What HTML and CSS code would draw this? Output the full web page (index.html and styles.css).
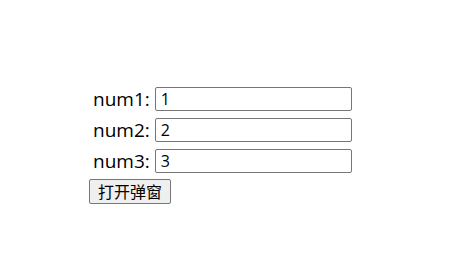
FILE: index.html
```html
<!DOCTYPE html>
<html lang="zh">
<head>
<meta charset="utf-8">
<title>弹窗</title>
<link rel="stylesheet" href="styles.css">
</head>
<body>
<div class="form">
  <div class="row"><label class="label" for="n1">num1:</label><input class="field" id="n1" type="text" value="1"></div>
  <div class="row"><label class="label" for="n2">num2:</label><input class="field" id="n2" type="text" value="2"></div>
  <div class="row"><label class="label" for="n3">num3:</label><input class="field" id="n3" type="text" value="3"></div>
  <div class="actions"><button class="btn" type="button">打开弹窗</button></div>
</div>
</body>
</html>
```
FILE: styles.css
```css
html, body {
  margin: 0;
  padding: 0;
  background: #ffffff;
}
.form {
  display: flex;
  flex-direction: column;
  gap: 7px;
  padding: 87px 0 0 89px;
}
.row {
  display: flex;
  align-items: center;
  height: 24px;
}
.label {
  font-family: "Open Sans", "Noto Sans CJK SC", sans-serif;
  font-size: 19px;
  color: #000;
  padding-left: 4px;
  margin-right: 5px;
  line-height: 24px;
}
.field {
  box-sizing: border-box;
  width: 197px;
  height: 24px;
  margin: 0;
  border: 1px solid #767676;
  border-radius: 2px;
  padding: 1px 5px;
  font-family: "Open Sans", "Noto Sans CJK SC", sans-serif;
  font-size: 16px;
  color: #000;
  background: #fff;
}
.actions {
  display: flex;
  margin-top: -1px;
}
.btn {
  box-sizing: border-box;
  width: 82px;
  height: 25px;
  margin: 0;
  padding: 0 8px;
  border: 1px solid #767676;
  border-radius: 2px;
  background: #efefef;
  font-family: "Noto Sans CJK SC", sans-serif;
  font-size: 16px;
  line-height: 21px;
  color: #000;
}
```
